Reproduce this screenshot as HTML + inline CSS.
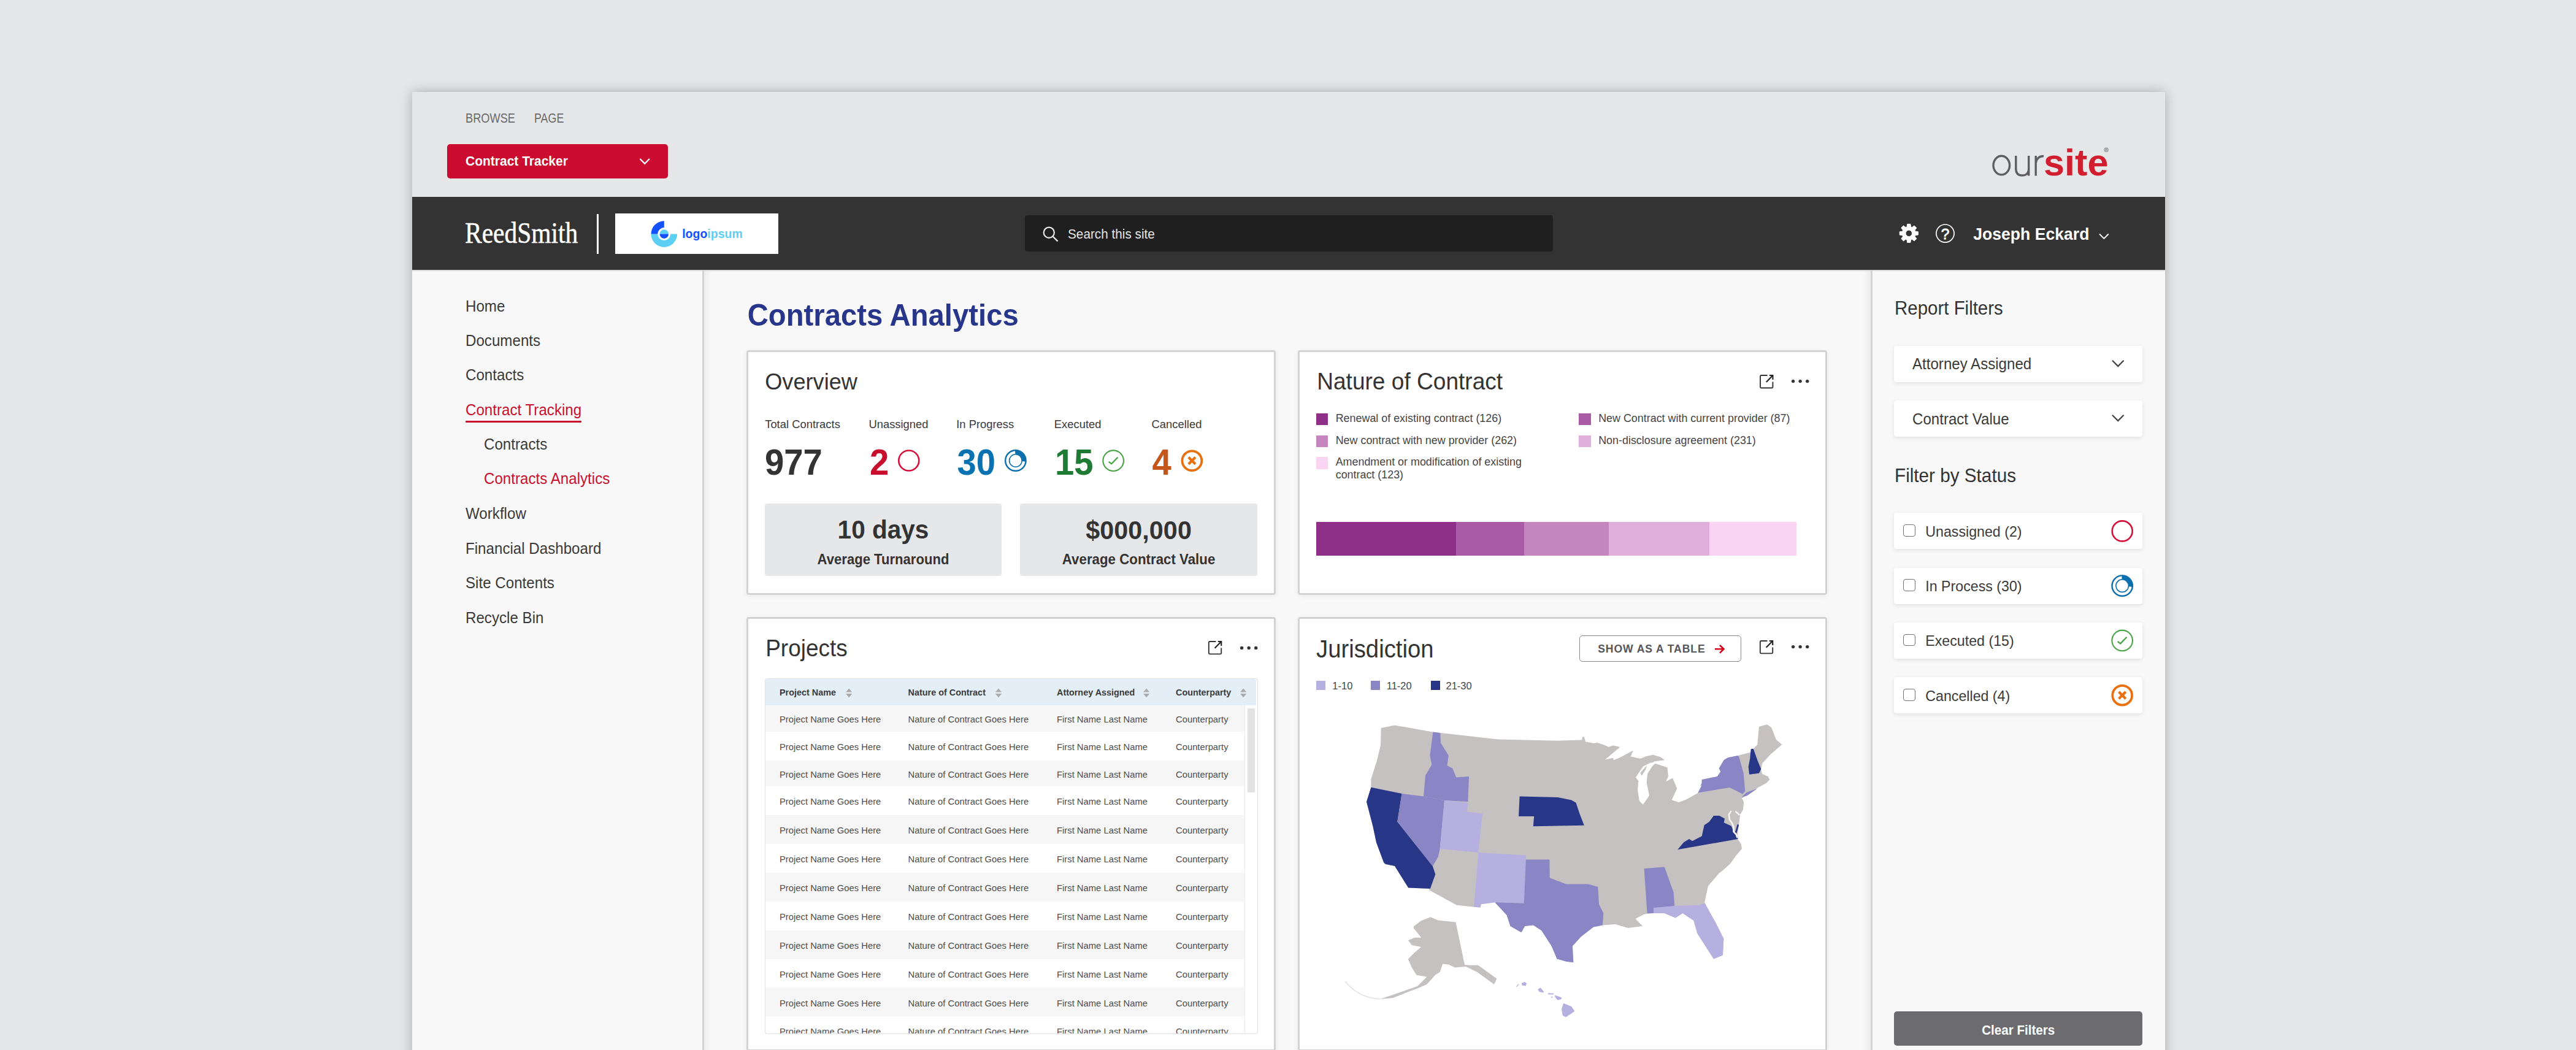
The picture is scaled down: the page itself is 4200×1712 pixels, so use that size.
<!DOCTYPE html><html><head><meta charset="utf-8"><title>Contracts Analytics</title><style>
html,body{margin:0;padding:0;width:4200px;height:1712px;overflow:hidden;background:#e6e7e9;font-family:'Liberation Sans',sans-serif;}
.t{position:absolute;white-space:pre;}
.r{position:absolute;}
.s{position:absolute;overflow:visible;}
</style></head><body>
<div class="r" style="left:672px;top:150px;width:2858px;height:1700px;background:#e6e7e9;box-shadow:0 0 20px rgba(0,0,0,0.27);"></div>
<div class="r" style="left:672.0px;top:440.0px;width:2858.0px;height:1272.0px;background:#f8f8f8;"></div>
<div class="r" style="left:1148.0px;top:440.0px;width:12.0px;height:1272.0px;background:linear-gradient(to right, #ececec, rgba(247,247,247,0));"></div>
<div class="r" style="left:3038.0px;top:440.0px;width:12.0px;height:1272.0px;background:linear-gradient(to left, #ececec, rgba(247,247,247,0));"></div>
<div class="r" style="left:1145.0px;top:440.0px;width:3.0px;height:1272.0px;background:#d3d3d3;"></div>
<div class="r" style="left:3049.5px;top:440.0px;width:3.0px;height:1272.0px;background:#d3d3d3;"></div>
<div class="r" style="left:672.0px;top:321.0px;width:2858.0px;height:119.0px;background:#333333;"></div>
<div class="r" style="left:672.0px;top:440.0px;width:2858.0px;height:3.0px;background:linear-gradient(#cfcfcf, rgba(247,247,247,0));"></div>
<div class="t" style="left:759.3px;top:178.48px;font-size:22px;line-height:29px;color:#6a6a6a;font-weight:400;transform:scaleX(0.828) ;transform-origin:0 22.12px;">BROWSE</div>
<div class="t" style="left:870.7px;top:178.48px;font-size:22px;line-height:29px;color:#6a6a6a;font-weight:400;transform:scaleX(0.812) ;transform-origin:0 22.12px;">PAGE</div>
<div class="r" style="left:728.6px;top:235.0px;width:360.1px;height:56.0px;background:#cb0b2f;border-radius:5px;"></div>
<div class="t" style="left:759.0px;top:249.42px;font-size:21px;line-height:27px;color:#ffffff;font-weight:700;transform:scaleY(1.04) ;transform-origin:0 20.78px;">Contract Tracker</div>
<svg class="s" style="left:1035px;top:250px;" width="32" height="25" viewBox="1035 250 32 25"><polyline points="1043.5,259 1051.2,266.8 1058.9,259" fill="none" stroke="#fff" stroke-width="2.3"/></svg>
<svg class="s" style="left:3240px;top:230px;" width="210" height="70" viewBox="3240 230 210 70">
<ellipse cx="3263.3" cy="269.6" rx="13.3" ry="15.3" fill="none" stroke="#5e5e60" stroke-width="3.4"/>
<path d="M3286.8,254 V275 Q3286.8,286 3297,286 Q3307.7,286 3307.7,275 M3307.7,254 V286.5" fill="none" stroke="#5e5e60" stroke-width="3.4"/>
<path d="M3319.2,254 V286.5 M3319.2,266 Q3321,254.5 3332,254.5" fill="none" stroke="#5e5e60" stroke-width="3.4"/>
<circle cx="3434.1" cy="244.2" r="3.2" fill="#c9c9ca" stroke="#9a9a9b" stroke-width="1.1"/><path d="M3433,246.3 V242.3 H3434.6 Q3435.6,242.3 3435.6,243.3 Q3435.6,244.3 3434.6,244.3 H3433 M3434.4,244.3 L3435.6,246.3" fill="none" stroke="#8a8a8b" stroke-width="0.7"/>
</svg>
<div class="t" style="left:3332.0px;top:225.16px;font-size:61.6px;line-height:80px;color:#d21f30;font-weight:700;transform:scaleX(0.995) ;transform-origin:0 61.34px;">site</div>
<div class="t" style="left:758.2px;top:348.50px;font-size:48px;line-height:62px;color:#ffffff;font-weight:400;font-family:'Liberation Serif', serif;transform:scaleX(0.864) ;transform-origin:0 47.20px;-webkit-text-stroke:0.5px #fff;">ReedSmith</div>
<div class="r" style="left:972.5px;top:349.0px;width:3.0px;height:65.0px;background:#ffffff;"></div>
<div class="r" style="left:1002.8px;top:348.4px;width:266.2px;height:65.9px;background:#ffffff;"></div>
<svg class="s" style="left:1055px;top:355px;" width="55" height="55" viewBox="1055 355 55 55">
<path d="M1061.5,381.6 A21.3,21.3 0 0 0 1104.1,381.6 L1093.3,381.6 A10.5,10.5 0 0 1 1072.3,381.6 Z" fill="#5ccff2"/>
<path d="M1061.5,381.6 A21.3,21.3 0 0 1 1082.8,360.3 L1082.8,371.1 A10.5,10.5 0 0 0 1072.3,381.6 Z" fill="#1351ff"/>
<path d="M1075.5,381.6 A7.3,7.3 0 0 1 1090.1,381.6 Z" fill="#5ccff2"/>
<path d="M1075.5,381.6 A7.3,7.3 0 0 0 1090.1,381.6 Z" fill="#1351ff"/>
</svg>
<div class="t" style="left:1112.2px;top:368.84px;font-size:19.5px;line-height:25px;color:#1351ff;font-weight:700;transform:scaleY(1.04) ;transform-origin:0 19.26px;"><span style="color:#1351ff">logo</span><span style="color:#5ccff2">ipsum</span></div>
<div class="r" style="left:1671.0px;top:351.0px;width:860.5px;height:58.7px;background:#1f1f1f;border-radius:4px;"></div>
<svg class="s" style="left:1695px;top:364px;" width="35" height="35" viewBox="1695 364 35 35"><circle cx="1710.3" cy="379.2" r="8.6" fill="none" stroke="#e8e8e8" stroke-width="2.2"/><line x1="1716.6" y1="385.5" x2="1724.5" y2="393.4" stroke="#e8e8e8" stroke-width="2.4"/></svg>
<div class="t" style="left:1740.8px;top:367.95px;font-size:21.5px;line-height:28px;color:#e4e4e4;font-weight:400;transform:scaleX(0.965) scaleY(1.04) ;transform-origin:0 21.45px;">Search this site</div>
<svg class="s" style="left:3090px;top:360px;" width="45" height="45" viewBox="3090 360 45 45"><path d="M3122.81,377.15 L3127.38,377.81 L3127.38,382.99 L3122.81,383.65 L3122.03,385.53 L3124.79,389.23 L3121.13,392.89 L3117.43,390.13 L3115.55,390.91 L3114.89,395.48 L3109.71,395.48 L3109.05,390.91 L3107.17,390.13 L3103.47,392.89 L3099.81,389.23 L3102.57,385.53 L3101.79,383.65 L3097.22,382.99 L3097.22,377.81 L3101.79,377.15 L3102.57,375.27 L3099.81,371.57 L3103.47,367.91 L3107.17,370.67 L3109.05,369.89 L3109.71,365.32 L3114.89,365.32 L3115.55,369.89 L3117.43,370.67 L3121.13,367.91 L3124.79,371.57 L3122.03,375.27 Z M3117.5,380.4 A5.2,5.2 0 1 0 3107.1000000000004,380.4 A5.2,5.2 0 1 0 3117.5,380.4 Z" fill="#fff" fill-rule="evenodd" stroke="#fff" stroke-width="1" stroke-linejoin="round"/></svg>
<svg class="s" style="left:3150px;top:360px;" width="45" height="45" viewBox="3150 360 45 45"><circle cx="3171.5" cy="380.6" r="14.6" fill="none" stroke="#fff" stroke-width="1.7"/></svg>
<div class="t" style="left:2171.6px;width:2000px;text-align:center;top:365.71px;font-size:24.5px;line-height:32px;color:#ffffff;font-weight:400;-webkit-text-stroke:0.8px #fff;">?</div>
<div class="t" style="left:3217.2px;top:364.88px;font-size:26.6px;line-height:35px;color:#ffffff;font-weight:700;transform:scaleY(1.04) ;transform-origin:0 26.72px;">Joseph Eckard</div>
<svg class="s" style="left:3415px;top:372px;" width="30" height="25" viewBox="3415 372 30 25"><polyline points="3423,381.5 3430.4,389 3437.8,381.5" fill="none" stroke="#fff" stroke-width="1.9"/></svg>
<div class="t" style="left:759.0px;top:483.83px;font-size:24.15px;line-height:31px;color:#3a3a3a;font-weight:400;transform:scaleY(1.07) ;transform-origin:0 23.87px;">Home</div>
<div class="t" style="left:759.0px;top:540.03px;font-size:24.15px;line-height:31px;color:#3a3a3a;font-weight:400;transform:scaleY(1.07) ;transform-origin:0 23.87px;">Documents</div>
<div class="t" style="left:759.0px;top:596.33px;font-size:24.15px;line-height:31px;color:#3a3a3a;font-weight:400;transform:scaleY(1.07) ;transform-origin:0 23.87px;">Contacts</div>
<div class="t" style="left:759.0px;top:652.53px;font-size:24.15px;line-height:31px;color:#c8102e;font-weight:400;transform:scaleY(1.07) ;transform-origin:0 23.87px;">Contract Tracking</div>
<div class="t" style="left:789.0px;top:709.03px;font-size:24.15px;line-height:31px;color:#3a3a3a;font-weight:400;transform:scaleY(1.07) ;transform-origin:0 23.87px;">Contracts</div>
<div class="t" style="left:789.0px;top:765.23px;font-size:24.15px;line-height:31px;color:#c8102e;font-weight:400;transform:scaleY(1.07) ;transform-origin:0 23.87px;">Contracts Analytics</div>
<div class="t" style="left:759.0px;top:821.93px;font-size:24.15px;line-height:31px;color:#3a3a3a;font-weight:400;transform:scaleY(1.07) ;transform-origin:0 23.87px;">Workflow</div>
<div class="t" style="left:759.0px;top:878.63px;font-size:24.15px;line-height:31px;color:#3a3a3a;font-weight:400;transform:scaleY(1.07) ;transform-origin:0 23.87px;">Financial Dashboard</div>
<div class="t" style="left:759.0px;top:935.33px;font-size:24.15px;line-height:31px;color:#3a3a3a;font-weight:400;transform:scaleY(1.07) ;transform-origin:0 23.87px;">Site Contents</div>
<div class="t" style="left:759.0px;top:991.73px;font-size:24.15px;line-height:31px;color:#3a3a3a;font-weight:400;transform:scaleY(1.07) ;transform-origin:0 23.87px;">Recycle Bin</div>
<div class="r" style="left:758.6px;top:685.6px;width:189.4px;height:3.0px;background:#c8102e;border-radius:1px;"></div>
<div class="t" style="left:1218.7px;top:484.23px;font-size:47.25px;line-height:61px;color:#27358a;font-weight:700;transform:scaleY(1.04) ;transform-origin:0 46.87px;">Contracts Analytics</div>
<div class="r" style="left:1217px;top:571px;width:857px;height:393px;background:#fff;border:3px solid #d3d3d3;border-radius:4px;box-shadow:0 2px 8px rgba(0,0,0,0.06);"></div>
<div class="r" style="left:2116px;top:571px;width:857px;height:393px;background:#fff;border:3px solid #d3d3d3;border-radius:4px;box-shadow:0 2px 8px rgba(0,0,0,0.06);"></div>
<div class="r" style="left:1217px;top:1006px;width:857px;height:701.5px;background:#fff;border:3px solid #d3d3d3;border-radius:4px;box-shadow:0 2px 8px rgba(0,0,0,0.06);"></div>
<div class="r" style="left:2116px;top:1006px;width:857px;height:701.5px;background:#fff;border:3px solid #d3d3d3;border-radius:4px;box-shadow:0 2px 8px rgba(0,0,0,0.06);"></div>
<div class="t" style="left:1247.2px;top:598.76px;font-size:36.2px;line-height:47px;color:#333;font-weight:400;transform:scaleY(1.04) ;transform-origin:0 36.04px;">Overview</div>
<div class="t" style="left:1247.2px;top:679.62px;font-size:18.4px;line-height:24px;color:#3a3a3a;font-weight:400;transform:scaleY(1.04) ;transform-origin:0 18.38px;">Total Contracts</div>
<div class="t" style="left:1416.4px;top:679.62px;font-size:18.4px;line-height:24px;color:#3a3a3a;font-weight:400;transform:scaleY(1.04) ;transform-origin:0 18.38px;">Unassigned</div>
<div class="t" style="left:1559.2px;top:679.62px;font-size:18.4px;line-height:24px;color:#3a3a3a;font-weight:400;transform:scaleY(1.04) ;transform-origin:0 18.38px;">In Progress</div>
<div class="t" style="left:1718.8px;top:679.62px;font-size:18.4px;line-height:24px;color:#3a3a3a;font-weight:400;transform:scaleY(1.04) ;transform-origin:0 18.38px;">Executed</div>
<div class="t" style="left:1877.6px;top:679.62px;font-size:18.4px;line-height:24px;color:#3a3a3a;font-weight:400;transform:scaleY(1.04) ;transform-origin:0 18.38px;">Cancelled</div>
<div class="t" style="left:1247.0px;top:717.99px;font-size:56.3px;line-height:73px;color:#333333;font-weight:700;transform:scaleY(1.045) ;transform-origin:0 56.01px;">977</div>
<div class="t" style="left:1418.0px;top:717.99px;font-size:56.3px;line-height:73px;color:#c8102e;font-weight:700;transform:scaleY(1.045) ;transform-origin:0 56.01px;">2</div>
<div class="t" style="left:1560.4px;top:717.99px;font-size:56.3px;line-height:73px;color:#0a72b0;font-weight:700;transform:scaleY(1.045) ;transform-origin:0 56.01px;">30</div>
<div class="t" style="left:1720.0px;top:717.99px;font-size:56.3px;line-height:73px;color:#1f7a34;font-weight:700;transform:scaleY(1.045) ;transform-origin:0 56.01px;">15</div>
<div class="t" style="left:1878.4px;top:717.99px;font-size:56.3px;line-height:73px;color:#c5561a;font-weight:700;transform:scaleY(1.045) ;transform-origin:0 56.01px;">4</div>
<svg class="s" style="left:1440px;top:720px;" width="540" height="60" viewBox="1440 720 540 60"><circle cx="1481.8" cy="751" r="16.5" fill="none" stroke="#d4103a" stroke-width="2.6"/><circle cx="1655.9" cy="751" r="16.7" fill="none" stroke="#0b6fae" stroke-width="2.4"/><circle cx="1655.9" cy="751" r="10.3" fill="none" stroke="#0b6fae" stroke-width="1.6"/><path d="M1655.00,733.82 A17.2,17.2 0 0 1 1673.01,752.80 L1666.44,752.11 A10.6,10.6 0 0 0 1655.35,740.41 Z" fill="#0b6fae"/><circle cx="1815.2" cy="751.2" r="16.8" fill="none" stroke="#4ba447" stroke-width="2.1"/><polyline points="1807.7,752.8000000000001 1812.2,756.2 1822.5,745.6" fill="none" stroke="#4ba447" stroke-width="2.3"/><circle cx="1943.4" cy="751.2" r="15.9" fill="none" stroke="#e9700f" stroke-width="3.8"/><path d="M1937.8000000000002,745.6 L1949.0,756.8000000000001 M1949.0,745.6 L1937.8000000000002,756.8000000000001" stroke="#e9700f" stroke-width="4.2"/></svg>
<div class="r" style="left:1246.8px;top:821.2px;width:386.4px;height:118.0px;background:#e6e7e9;border-radius:4px;"></div>
<div class="r" style="left:1663.2px;top:821.2px;width:386.8px;height:118.0px;background:#e6e7e9;border-radius:4px;"></div>
<div class="t" style="left:440.0px;width:2000px;text-align:center;top:838.45px;font-size:40.55px;line-height:53px;color:#333;font-weight:700;transform:scaleY(1.04) ;transform-origin:0 40.55px;">10 days</div>
<div class="t" style="left:440.0px;width:2000px;text-align:center;top:897.84px;font-size:22.1px;line-height:29px;color:#333;font-weight:700;transform:scaleY(1.04) ;transform-origin:0 22.16px;">Average Turnaround</div>
<div class="t" style="left:856.6px;width:2000px;text-align:center;top:837.65px;font-size:41.4px;line-height:54px;color:#333;font-weight:700;transform:scaleY(1.04) ;transform-origin:0 41.35px;">$000,000</div>
<div class="t" style="left:856.6px;width:2000px;text-align:center;top:897.77px;font-size:22.3px;line-height:29px;color:#333;font-weight:700;transform:scaleY(1.04) ;transform-origin:0 22.23px;">Average Contract Value</div>
<div class="t" style="left:2147.2px;top:597.94px;font-size:37.1px;line-height:48px;color:#333;font-weight:400;transform:scaleY(1.04) ;transform-origin:0 36.86px;">Nature of Contract</div>
<svg class="s" style="left:2860px;top:600px;" width="100" height="45" viewBox="2860 600 100 45"><path d="M2881.6499999999996,612.0500000000001 H2871.5499999999997 Q2870.0499999999997,612.0500000000001 2870.0499999999997,613.5500000000001 V630.9499999999999 Q2870.0499999999997,632.4499999999999 2871.5499999999997,632.4499999999999 H2888.9500000000003 Q2890.4500000000003,632.4499999999999 2890.4500000000003,630.9499999999999 V622.5500000000001" fill="none" stroke="#333" stroke-width="1.9"/><path d="M2884.95,612.0500000000001 H2890.4500000000003 V619.0500000000001" fill="none" stroke="#222" stroke-width="2.1"/><path d="M2890.15,612.35 L2879.85,622.95" fill="none" stroke="#222" stroke-width="2.1999999999999997"/><circle cx="2923.60" cy="621.6" r="2.7" fill="#333"/><circle cx="2935.15" cy="621.6" r="2.7" fill="#333"/><circle cx="2946.70" cy="621.6" r="2.7" fill="#333"/></svg>
<div class="r" style="left:2145.6px;top:673.8px;width:19.6px;height:19.2px;background:#8e3088;"></div>
<div class="t" style="left:2177.7px;top:670.80px;font-size:17.9px;line-height:23px;color:#444;font-weight:400;transform:scaleY(1.04) ;transform-origin:0 17.70px;">Renewal of existing contract (126)</div>
<div class="r" style="left:2145.6px;top:709.7px;width:19.6px;height:19.2px;background:#c586bd;"></div>
<div class="t" style="left:2177.7px;top:706.70px;font-size:17.9px;line-height:23px;color:#444;font-weight:400;transform:scaleY(1.04) ;transform-origin:0 17.70px;">New contract with new provider (262)</div>
<div class="r" style="left:2145.6px;top:745.4px;width:19.6px;height:19.2px;background:#fad5f3;"></div>
<div class="t" style="left:2177.7px;top:742.30px;font-size:17.9px;line-height:23px;color:#444;font-weight:400;transform:scaleY(1.04) ;transform-origin:0 17.70px;">Amendment or modification of existing</div>
<div class="r" style="left:2574.4px;top:673.8px;width:19.6px;height:19.2px;background:#a95ca5;"></div>
<div class="t" style="left:2606.2px;top:670.80px;font-size:17.9px;line-height:23px;color:#444;font-weight:400;transform:scaleY(1.04) ;transform-origin:0 17.70px;">New Contract with current provider (87)</div>
<div class="r" style="left:2574.4px;top:709.7px;width:19.6px;height:19.2px;background:#e0aedb;"></div>
<div class="t" style="left:2606.2px;top:706.70px;font-size:17.9px;line-height:23px;color:#444;font-weight:400;transform:scaleY(1.04) ;transform-origin:0 17.70px;">Non-disclosure agreement (231)</div>
<div class="t" style="left:2177.7px;top:763.00px;font-size:17.9px;line-height:23px;color:#444;font-weight:400;transform:scaleY(1.04) ;transform-origin:0 17.70px;">contract (123)</div>
<div class="r" style="left:2145.6px;top:850.8px;width:228.0px;height:55.2px;background:#8e3088;"></div>
<div class="r" style="left:2373.6px;top:850.8px;width:111.6px;height:55.2px;background:#a95ca5;"></div>
<div class="r" style="left:2485.2px;top:850.8px;width:138.0px;height:55.2px;background:#c586bd;"></div>
<div class="r" style="left:2623.2px;top:850.8px;width:164.0px;height:55.2px;background:#e0aedb;"></div>
<div class="r" style="left:2787.2px;top:850.8px;width:141.6px;height:55.2px;background:#fad5f3;"></div>
<div class="t" style="left:1248.2px;top:1033.58px;font-size:37px;line-height:48px;color:#333;font-weight:400;transform:scaleY(1.04) ;transform-origin:0 36.82px;">Projects</div>
<svg class="s" style="left:1960px;top:1035px;" width="100" height="45" viewBox="1960 1035 100 45"><path d="M1982.45,1045.95 H1972.3500000000001 Q1970.8500000000001,1045.95 1970.8500000000001,1047.45 V1064.85 Q1970.8500000000001,1066.35 1972.3500000000001,1066.35 H1989.75 Q1991.25,1066.35 1991.25,1064.85 V1056.45" fill="none" stroke="#333" stroke-width="1.9"/><path d="M1985.7500000000002,1045.95 H1991.25 V1052.95" fill="none" stroke="#222" stroke-width="2.1"/><path d="M1990.95,1046.25 L1980.65,1056.8500000000001" fill="none" stroke="#222" stroke-width="2.1999999999999997"/><circle cx="2024.60" cy="1056.4" r="2.7" fill="#333"/><circle cx="2036.15" cy="1056.4" r="2.7" fill="#333"/><circle cx="2047.70" cy="1056.4" r="2.7" fill="#333"/></svg>
<div class="r" style="left:1246.8px;top:1106px;width:801.8px;height:578px;border:1px solid #e3e3e3;border-radius:4px;background:#fff;overflow:hidden;"></div>
<div class="r" style="left:1247.8px;top:1106.8px;width:799.8px;height:43.2px;background:#e4eef6;border-radius:4px 4px 0 0;"></div>
<div class="t" style="left:1271.0px;top:1119.51px;font-size:14.4px;line-height:19px;color:#3a3a3a;font-weight:700;transform:scaleY(1.04) ;transform-origin:0 14.49px;">Project Name</div>
<div class="t" style="left:1480.6px;top:1119.51px;font-size:14.4px;line-height:19px;color:#3a3a3a;font-weight:700;transform:scaleY(1.04) ;transform-origin:0 14.49px;">Nature of Contract</div>
<div class="t" style="left:1723.0px;top:1119.51px;font-size:14.4px;line-height:19px;color:#3a3a3a;font-weight:700;transform:scaleY(1.04) ;transform-origin:0 14.49px;">Attorney Assigned</div>
<div class="t" style="left:1917.0px;top:1119.51px;font-size:14.4px;line-height:19px;color:#3a3a3a;font-weight:700;transform:scaleY(1.04) ;transform-origin:0 14.49px;">Counterparty</div>
<svg class="s" style="left:1370px;top:1115px;" width="680" height="30" viewBox="1370 1115 680 30"><path d="M1379,1128.6 L1384.2,1122.4 L1389.4,1128.6 Z M1379,1131 L1384.2,1137.2 L1389.4,1131 Z" fill="#ababab"/><path d="M1622.8,1128.6 L1628.0,1122.4 L1633.2,1128.6 Z M1622.8,1131 L1628.0,1137.2 L1633.2,1131 Z" fill="#ababab"/><path d="M1864,1128.6 L1869.2,1122.4 L1874.4,1128.6 Z M1864,1131 L1869.2,1137.2 L1874.4,1131 Z" fill="#ababab"/><path d="M2022,1128.6 L2027.2,1122.4 L2032.4,1128.6 Z M2022,1131 L2027.2,1137.2 L2032.4,1131 Z" fill="#ababab"/></svg>
<div class="r" style="left:1247.8px;top:1150.0px;width:781.2px;height:43.0px;background:#f6f6f6;"></div>
<div class="t" style="left:1271.0px;top:1164.27px;font-size:14.8px;line-height:19px;color:#4d4d4d;font-weight:400;transform:scaleY(1.04) ;transform-origin:0 14.63px;">Project Name Goes Here</div>
<div class="t" style="left:1480.6px;top:1164.27px;font-size:14.8px;line-height:19px;color:#4d4d4d;font-weight:400;transform:scaleY(1.04) ;transform-origin:0 14.63px;">Nature of Contract Goes Here</div>
<div class="t" style="left:1723.0px;top:1164.27px;font-size:14.8px;line-height:19px;color:#4d4d4d;font-weight:400;transform:scaleY(1.04) ;transform-origin:0 14.63px;">First Name Last Name</div>
<div class="t" style="left:1917.0px;top:1164.27px;font-size:14.8px;line-height:19px;color:#4d4d4d;font-weight:400;transform:scaleY(1.04) ;transform-origin:0 14.63px;">Counterparty</div>
<div class="t" style="left:1271.0px;top:1209.07px;font-size:14.8px;line-height:19px;color:#4d4d4d;font-weight:400;transform:scaleY(1.04) ;transform-origin:0 14.63px;">Project Name Goes Here</div>
<div class="t" style="left:1480.6px;top:1209.07px;font-size:14.8px;line-height:19px;color:#4d4d4d;font-weight:400;transform:scaleY(1.04) ;transform-origin:0 14.63px;">Nature of Contract Goes Here</div>
<div class="t" style="left:1723.0px;top:1209.07px;font-size:14.8px;line-height:19px;color:#4d4d4d;font-weight:400;transform:scaleY(1.04) ;transform-origin:0 14.63px;">First Name Last Name</div>
<div class="t" style="left:1917.0px;top:1209.07px;font-size:14.8px;line-height:19px;color:#4d4d4d;font-weight:400;transform:scaleY(1.04) ;transform-origin:0 14.63px;">Counterparty</div>
<div class="r" style="left:1247.8px;top:1239.6px;width:781.2px;height:42.8px;background:#f6f6f6;"></div>
<div class="t" style="left:1271.0px;top:1253.77px;font-size:14.8px;line-height:19px;color:#4d4d4d;font-weight:400;transform:scaleY(1.04) ;transform-origin:0 14.63px;">Project Name Goes Here</div>
<div class="t" style="left:1480.6px;top:1253.77px;font-size:14.8px;line-height:19px;color:#4d4d4d;font-weight:400;transform:scaleY(1.04) ;transform-origin:0 14.63px;">Nature of Contract Goes Here</div>
<div class="t" style="left:1723.0px;top:1253.77px;font-size:14.8px;line-height:19px;color:#4d4d4d;font-weight:400;transform:scaleY(1.04) ;transform-origin:0 14.63px;">First Name Last Name</div>
<div class="t" style="left:1917.0px;top:1253.77px;font-size:14.8px;line-height:19px;color:#4d4d4d;font-weight:400;transform:scaleY(1.04) ;transform-origin:0 14.63px;">Counterparty</div>
<div class="t" style="left:1271.0px;top:1298.22px;font-size:14.8px;line-height:19px;color:#4d4d4d;font-weight:400;transform:scaleY(1.04) ;transform-origin:0 14.63px;">Project Name Goes Here</div>
<div class="t" style="left:1480.6px;top:1298.22px;font-size:14.8px;line-height:19px;color:#4d4d4d;font-weight:400;transform:scaleY(1.04) ;transform-origin:0 14.63px;">Nature of Contract Goes Here</div>
<div class="t" style="left:1723.0px;top:1298.22px;font-size:14.8px;line-height:19px;color:#4d4d4d;font-weight:400;transform:scaleY(1.04) ;transform-origin:0 14.63px;">First Name Last Name</div>
<div class="t" style="left:1917.0px;top:1298.22px;font-size:14.8px;line-height:19px;color:#4d4d4d;font-weight:400;transform:scaleY(1.04) ;transform-origin:0 14.63px;">Counterparty</div>
<div class="r" style="left:1247.8px;top:1328.5px;width:781.2px;height:47.3px;background:#f6f6f6;"></div>
<div class="t" style="left:1271.0px;top:1344.92px;font-size:14.8px;line-height:19px;color:#4d4d4d;font-weight:400;transform:scaleY(1.04) ;transform-origin:0 14.63px;">Project Name Goes Here</div>
<div class="t" style="left:1480.6px;top:1344.92px;font-size:14.8px;line-height:19px;color:#4d4d4d;font-weight:400;transform:scaleY(1.04) ;transform-origin:0 14.63px;">Nature of Contract Goes Here</div>
<div class="t" style="left:1723.0px;top:1344.92px;font-size:14.8px;line-height:19px;color:#4d4d4d;font-weight:400;transform:scaleY(1.04) ;transform-origin:0 14.63px;">First Name Last Name</div>
<div class="t" style="left:1917.0px;top:1344.92px;font-size:14.8px;line-height:19px;color:#4d4d4d;font-weight:400;transform:scaleY(1.04) ;transform-origin:0 14.63px;">Counterparty</div>
<div class="t" style="left:1271.0px;top:1392.02px;font-size:14.8px;line-height:19px;color:#4d4d4d;font-weight:400;transform:scaleY(1.04) ;transform-origin:0 14.63px;">Project Name Goes Here</div>
<div class="t" style="left:1480.6px;top:1392.02px;font-size:14.8px;line-height:19px;color:#4d4d4d;font-weight:400;transform:scaleY(1.04) ;transform-origin:0 14.63px;">Nature of Contract Goes Here</div>
<div class="t" style="left:1723.0px;top:1392.02px;font-size:14.8px;line-height:19px;color:#4d4d4d;font-weight:400;transform:scaleY(1.04) ;transform-origin:0 14.63px;">First Name Last Name</div>
<div class="t" style="left:1917.0px;top:1392.02px;font-size:14.8px;line-height:19px;color:#4d4d4d;font-weight:400;transform:scaleY(1.04) ;transform-origin:0 14.63px;">Counterparty</div>
<div class="r" style="left:1247.8px;top:1422.7px;width:781.2px;height:47.3px;background:#f6f6f6;"></div>
<div class="t" style="left:1271.0px;top:1439.12px;font-size:14.8px;line-height:19px;color:#4d4d4d;font-weight:400;transform:scaleY(1.04) ;transform-origin:0 14.63px;">Project Name Goes Here</div>
<div class="t" style="left:1480.6px;top:1439.12px;font-size:14.8px;line-height:19px;color:#4d4d4d;font-weight:400;transform:scaleY(1.04) ;transform-origin:0 14.63px;">Nature of Contract Goes Here</div>
<div class="t" style="left:1723.0px;top:1439.12px;font-size:14.8px;line-height:19px;color:#4d4d4d;font-weight:400;transform:scaleY(1.04) ;transform-origin:0 14.63px;">First Name Last Name</div>
<div class="t" style="left:1917.0px;top:1439.12px;font-size:14.8px;line-height:19px;color:#4d4d4d;font-weight:400;transform:scaleY(1.04) ;transform-origin:0 14.63px;">Counterparty</div>
<div class="t" style="left:1271.0px;top:1486.02px;font-size:14.8px;line-height:19px;color:#4d4d4d;font-weight:400;transform:scaleY(1.04) ;transform-origin:0 14.63px;">Project Name Goes Here</div>
<div class="t" style="left:1480.6px;top:1486.02px;font-size:14.8px;line-height:19px;color:#4d4d4d;font-weight:400;transform:scaleY(1.04) ;transform-origin:0 14.63px;">Nature of Contract Goes Here</div>
<div class="t" style="left:1723.0px;top:1486.02px;font-size:14.8px;line-height:19px;color:#4d4d4d;font-weight:400;transform:scaleY(1.04) ;transform-origin:0 14.63px;">First Name Last Name</div>
<div class="t" style="left:1917.0px;top:1486.02px;font-size:14.8px;line-height:19px;color:#4d4d4d;font-weight:400;transform:scaleY(1.04) ;transform-origin:0 14.63px;">Counterparty</div>
<div class="r" style="left:1247.8px;top:1516.5px;width:781.2px;height:47.3px;background:#f6f6f6;"></div>
<div class="t" style="left:1271.0px;top:1532.92px;font-size:14.8px;line-height:19px;color:#4d4d4d;font-weight:400;transform:scaleY(1.04) ;transform-origin:0 14.63px;">Project Name Goes Here</div>
<div class="t" style="left:1480.6px;top:1532.92px;font-size:14.8px;line-height:19px;color:#4d4d4d;font-weight:400;transform:scaleY(1.04) ;transform-origin:0 14.63px;">Nature of Contract Goes Here</div>
<div class="t" style="left:1723.0px;top:1532.92px;font-size:14.8px;line-height:19px;color:#4d4d4d;font-weight:400;transform:scaleY(1.04) ;transform-origin:0 14.63px;">First Name Last Name</div>
<div class="t" style="left:1917.0px;top:1532.92px;font-size:14.8px;line-height:19px;color:#4d4d4d;font-weight:400;transform:scaleY(1.04) ;transform-origin:0 14.63px;">Counterparty</div>
<div class="t" style="left:1271.0px;top:1579.82px;font-size:14.8px;line-height:19px;color:#4d4d4d;font-weight:400;transform:scaleY(1.04) ;transform-origin:0 14.63px;">Project Name Goes Here</div>
<div class="t" style="left:1480.6px;top:1579.82px;font-size:14.8px;line-height:19px;color:#4d4d4d;font-weight:400;transform:scaleY(1.04) ;transform-origin:0 14.63px;">Nature of Contract Goes Here</div>
<div class="t" style="left:1723.0px;top:1579.82px;font-size:14.8px;line-height:19px;color:#4d4d4d;font-weight:400;transform:scaleY(1.04) ;transform-origin:0 14.63px;">First Name Last Name</div>
<div class="t" style="left:1917.0px;top:1579.82px;font-size:14.8px;line-height:19px;color:#4d4d4d;font-weight:400;transform:scaleY(1.04) ;transform-origin:0 14.63px;">Counterparty</div>
<div class="r" style="left:1247.8px;top:1610.3px;width:781.2px;height:46.9px;background:#f6f6f6;"></div>
<div class="t" style="left:1271.0px;top:1626.52px;font-size:14.8px;line-height:19px;color:#4d4d4d;font-weight:400;transform:scaleY(1.04) ;transform-origin:0 14.63px;">Project Name Goes Here</div>
<div class="t" style="left:1480.6px;top:1626.52px;font-size:14.8px;line-height:19px;color:#4d4d4d;font-weight:400;transform:scaleY(1.04) ;transform-origin:0 14.63px;">Nature of Contract Goes Here</div>
<div class="t" style="left:1723.0px;top:1626.52px;font-size:14.8px;line-height:19px;color:#4d4d4d;font-weight:400;transform:scaleY(1.04) ;transform-origin:0 14.63px;">First Name Last Name</div>
<div class="t" style="left:1917.0px;top:1626.52px;font-size:14.8px;line-height:19px;color:#4d4d4d;font-weight:400;transform:scaleY(1.04) ;transform-origin:0 14.63px;">Counterparty</div>
<div class="t" style="left:1271.0px;top:1673.22px;font-size:14.8px;line-height:19px;color:#4d4d4d;font-weight:400;transform:scaleY(1.04) ;transform-origin:0 14.63px;">Project Name Goes Here</div>
<div class="t" style="left:1480.6px;top:1673.22px;font-size:14.8px;line-height:19px;color:#4d4d4d;font-weight:400;transform:scaleY(1.04) ;transform-origin:0 14.63px;">Nature of Contract Goes Here</div>
<div class="t" style="left:1723.0px;top:1673.22px;font-size:14.8px;line-height:19px;color:#4d4d4d;font-weight:400;transform:scaleY(1.04) ;transform-origin:0 14.63px;">First Name Last Name</div>
<div class="t" style="left:1917.0px;top:1673.22px;font-size:14.8px;line-height:19px;color:#4d4d4d;font-weight:400;transform:scaleY(1.04) ;transform-origin:0 14.63px;">Counterparty</div>
<div class="r" style="left:1240.0px;top:1685.0px;width:820.0px;height:24.0px;background:#ffffff;"></div>
<div class="r" style="left:1246.8px;top:1106px;width:801.8px;height:578px;border:1px solid #e3e3e3;border-radius:4px;"></div>
<div class="r" style="left:2029.0px;top:1150.0px;width:1.0px;height:534.5px;background:#ececec;"></div>
<div class="r" style="left:2030.0px;top:1150.0px;width:19.0px;height:534.5px;background:#ffffff;"></div>
<div class="r" style="left:2034.0px;top:1155.0px;width:12.0px;height:137.0px;background:#e3e3e3;"></div>
<div class="t" style="left:2146.0px;top:1033.73px;font-size:38.3px;line-height:50px;color:#333;font-weight:400;transform:scaleY(1.04) ;transform-origin:0 38.27px;">Jurisdiction</div>
<div class="r" style="left:2575.2px;top:1036px;width:264px;height:43.4px;box-sizing:border-box;border:1.8px solid #8a8a8a;border-radius:5px;background:#fff;"></div>
<div class="t" style="left:2605.2px;top:1047.20px;font-size:17.6px;line-height:23px;color:#56565b;font-weight:700;transform:scaleY(1.04) ;transform-origin:0 17.60px;letter-spacing:0.9px;">SHOW AS A TABLE</div>
<svg class="s" style="left:2790px;top:1045px;" width="30" height="25" viewBox="2790 1045 30 25"><path d="M2796,1058.3 H2810 M2804,1052 L2810.5,1058.3 L2804,1064.6" fill="none" stroke="#d0021b" stroke-width="2.6"/></svg>
<svg class="s" style="left:2860px;top:1035px;" width="100" height="45" viewBox="2860 1035 100 45"><path d="M2881.45,1044.95 H2871.35 Q2869.85,1044.95 2869.85,1046.45 V1063.85 Q2869.85,1065.35 2871.35,1065.35 H2888.7500000000005 Q2890.2500000000005,1065.35 2890.2500000000005,1063.85 V1055.45" fill="none" stroke="#333" stroke-width="1.9"/><path d="M2884.75,1044.95 H2890.2500000000005 V1051.95" fill="none" stroke="#222" stroke-width="2.1"/><path d="M2889.9500000000003,1045.25 L2879.65,1055.8500000000001" fill="none" stroke="#222" stroke-width="2.1999999999999997"/><circle cx="2923.60" cy="1054.6" r="2.7" fill="#333"/><circle cx="2935.15" cy="1054.6" r="2.7" fill="#333"/><circle cx="2946.70" cy="1054.6" r="2.7" fill="#333"/></svg>
<div class="r" style="left:2145.8px;top:1109.8px;width:15.2px;height:15.2px;background:#b5b0e0;"></div>
<div class="t" style="left:2172.3px;top:1107.58px;font-size:16.5px;line-height:21px;color:#444;font-weight:400;transform:scaleY(1.04) ;transform-origin:0 16.22px;">1-10</div>
<div class="r" style="left:2235.2px;top:1109.8px;width:15.2px;height:15.2px;background:#8a85c4;"></div>
<div class="t" style="left:2260.7px;top:1107.58px;font-size:16.5px;line-height:21px;color:#444;font-weight:400;transform:scaleY(1.04) ;transform-origin:0 16.22px;">11-20</div>
<div class="r" style="left:2332.7px;top:1109.8px;width:15.2px;height:15.2px;background:#283688;"></div>
<div class="t" style="left:2357.5px;top:1107.58px;font-size:16.5px;line-height:21px;color:#444;font-weight:400;transform:scaleY(1.04) ;transform-origin:0 16.22px;">21-30</div>
<svg class="s" style="left:2180px;top:1170px;" width="740" height="500" viewBox="2180 1170 740 500"><polygon points="2251.7,1187.1 2273.8,1182.4 2335.9,1193.6 2442.2,1205.4 2540.0,1207.8 2560.0,1207.1 2579.3,1206.4 2580.0,1201.4 2582.9,1201.4 2585.0,1209.3 2598.6,1212.1 2604.3,1211.1 2614.3,1214.3 2622.9,1217.9 2630.0,1215.4 2641.4,1217.9 2617.1,1238.6 2630.0,1235.7 2631.4,1239.3 2642.9,1234.3 2662.9,1223.6 2658.6,1233.6 2668.6,1235.7 2674.3,1237.1 2684.3,1232.9 2695.0,1230.7 2707.1,1234.3 2714.3,1239.3 2697.1,1241.4 2694.3,1244.3 2701.4,1245.7 2718.6,1251.4 2720.0,1265.7 2716.4,1274.3 2727.1,1268.6 2734.3,1285.7 2725.7,1304.3 2737.3,1308.0 2748.0,1304.0 2768.0,1292.7 2768.0,1290.7 2774.7,1276.7 2774.7,1271.3 2784.0,1269.3 2800.0,1266.0 2805.3,1258.0 2802.7,1252.7 2810.7,1239.3 2817.3,1235.3 2833.3,1232.0 2853.3,1226.7 2865.3,1214.0 2868.0,1184.7 2881.3,1181.3 2888.0,1186.0 2896.0,1206.0 2905.3,1214.0 2886.7,1230.0 2873.3,1244.7 2871.3,1255.3 2873.3,1262.0 2882.7,1266.0 2885.3,1271.3 2880.0,1276.7 2865.3,1284.7 2840.0,1301.3 2843.3,1308.0 2842.0,1320.0 2837.3,1328.0 2836.0,1337.3 2833.3,1360.0 2833.3,1368.0 2838.7,1376.0 2840.0,1384.0 2830.7,1394.7 2821.3,1408.0 2808.0,1420.0 2802.9,1423.8 2785.1,1444.6 2779.2,1471.3 2797.0,1504.0 2810.4,1530.7 2808.9,1557.4 2794.0,1563.4 2767.3,1521.8 2761.4,1501.0 2743.5,1489.1 2731.7,1496.5 2713.8,1489.1 2696.0,1489.1 2681.2,1490.6 2666.3,1498.0 2678.2,1509.9 2654.4,1512.9 2633.7,1507.0 2612.9,1508.4 2598.0,1511.4 2577.2,1527.7 2563.9,1542.6 2565.3,1569.3 2553.5,1567.8 2538.6,1563.4 2529.7,1542.6 2513.4,1517.3 2500.0,1508.4 2486.3,1509.9 2480.4,1520.3 2462.5,1509.9 2456.6,1492.0 2437.3,1471.3 2415.0,1474.2 2413.5,1479.6 2403.1,1478.7 2374.9,1475.7 2328.9,1450.5 2331.9,1449.0 2296.2,1447.5 2274.0,1412.0 2259.0,1409.0 2256.0,1406.0 2244.0,1373.8 2238.4,1347.2 2228.0,1307.3 2235.4,1283.7 2235.4,1270.4 2245.0,1240.0 2251.0,1215.0" fill="#c5c1c1"/><polygon points="2235.4,1283.7 2285.6,1294.0 2278.3,1339.8 2335.9,1412.2 2340.3,1425.5 2331.9,1449.0 2296.2,1447.5 2274.0,1412.0 2259.0,1409.0 2256.0,1406.0 2244.0,1373.8 2238.4,1347.2 2228.0,1307.3" fill="#283688"/><polygon points="2285.6,1294.0 2321.0,1298.5 2355.0,1305.0 2347.7,1384.0 2344.7,1397.4 2335.9,1412.2 2278.3,1339.8" fill="#8a85c4"/><polygon points="2336.4,1193.6 2348.3,1195.1 2349.0,1211.3 2361.8,1232.0 2359.5,1248.3 2368.3,1252.7 2374.2,1267.5 2395.0,1266.0 2393.4,1307.3 2355.0,1305.0 2321.0,1298.5 2324.0,1264.5 2334.4,1246.8 2331.4,1232.0" fill="#8a85c4"/><polygon points="2355.0,1305.0 2393.4,1308.8 2392.0,1323.6 2417.0,1326.5 2410.3,1390.0 2347.7,1384.0" fill="#b5b0e0"/><polygon points="2410.3,1390.0 2488.0,1394.5 2484.8,1472.8 2437.3,1471.3 2415.0,1474.2 2413.5,1479.6 2403.1,1478.7" fill="#b5b0e0"/><polygon points="2487.8,1401.5 2526.4,1401.5 2526.7,1431.2 2553.5,1441.6 2589.1,1441.6 2605.4,1446.0 2607.0,1474.3 2614.3,1489.1 2612.9,1508.4 2598.0,1511.4 2577.2,1527.7 2563.9,1542.6 2565.3,1569.3 2553.5,1567.8 2538.6,1563.4 2529.7,1542.6 2513.4,1517.3 2500.0,1508.4 2486.3,1509.9 2480.4,1520.3 2462.5,1509.9 2456.6,1492.0 2437.3,1471.3 2484.8,1472.8" fill="#8a85c4"/><polygon points="2477.6,1298.5 2540.0,1300.0 2562.0,1304.4 2569.5,1308.8 2575.4,1326.5 2582.8,1345.7 2499.8,1347.2 2501.2,1331.0 2476.1,1331.0" fill="#283688"/><polygon points="2680.6,1416.3 2713.8,1413.4 2728.7,1455.0 2730.2,1477.2 2696.0,1480.2 2696.0,1489.1 2685.6,1489.1" fill="#8a85c4"/><polygon points="2696.0,1480.2 2730.2,1477.2 2770.3,1475.7 2779.2,1472.8 2797.0,1504.0 2810.4,1530.7 2808.9,1557.4 2794.0,1563.4 2767.3,1521.8 2761.4,1501.0 2743.5,1489.1 2731.7,1496.5 2713.8,1489.1 2696.0,1489.1" fill="#b5b0e0"/><polygon points="2735.3,1385.3 2745.3,1373.3 2754.0,1368.0 2759.3,1371.3 2774.7,1363.3 2778.7,1345.3 2786.7,1340.0 2794.0,1330.0 2803.3,1330.0 2812.0,1334.7 2810.7,1341.3 2822.7,1346.7 2826.7,1356.0 2833.3,1364.0 2833.3,1368.0" fill="#283688"/><polygon points="2832.7,1344.0 2835.2,1344.7 2831.3,1358.7 2828.8,1357.3" fill="#283688"/><polygon points="2768.0,1290.7 2774.7,1276.7 2774.7,1271.3 2784.0,1269.3 2800.0,1266.0 2805.3,1258.0 2802.7,1252.7 2810.7,1239.3 2817.3,1235.3 2833.3,1232.0 2835.3,1234.0 2842.7,1260.7 2845.3,1290.0 2841.3,1294.7 2826.7,1287.3 2820.0,1284.0 2768.0,1292.7" fill="#8a85c4"/><polygon points="2839.5,1300.5 2846.7,1292.5 2865.5,1285.5 2849.0,1297.0" fill="#8a85c4"/><polygon points="2854.7,1221.3 2858.7,1220.7 2865.3,1239.3 2871.3,1254.0 2868.0,1260.7 2852.0,1262.7 2850.7,1250.0 2853.3,1236.7" fill="#283688"/><polygon points="2304.9,1510.5 2317.1,1501.3 2332.3,1495.2 2344.5,1500.6 2373.5,1503.6 2388.0,1572.9 2394.8,1573.7 2410.0,1573.7 2440.5,1595.8 2436.0,1604.9 2408.5,1585.1 2390.2,1576.0 2372.0,1577.5 2362.8,1572.9 2352.2,1571.4 2347.6,1585.1 2340.0,1589.7 2326.3,1604.9 2312.5,1611.0 2292.7,1618.6 2271.4,1627.0 2250.0,1629.0 2271.0,1622.0 2311.0,1608.0 2326.3,1592.7 2309.5,1589.7 2301.9,1577.5 2295.8,1563.8 2304.9,1554.6 2317.1,1544.0 2301.9,1540.9 2295.8,1533.3 2306.4,1528.8 2317.1,1528.8 2312.5,1522.7 2304.9,1513.5" fill="#c5c1c1"/><polygon points="2725.3,1304.0 2737.3,1308.0 2748.0,1304.0 2768.0,1293.3 2774.7,1280.0 2760.0,1290.0 2733.3,1300.0" fill="#fff"/><polygon points="2667.0,1267.5 2678.8,1249.7 2690.6,1243.8 2701.0,1242.4 2693.6,1249.7 2686.2,1261.6 2684.7,1276.3 2689.1,1297.0 2678.8,1311.8 2672.9,1305.9 2670.0,1288.1 2671.4,1273.4" fill="#fff"/><polygon points="2674.4,1260.0 2685.5,1247.5 2682.5,1256.0 2676.5,1265.0" fill="#c5c1c1"/><polyline points="2822.7,1322.1 2818.8,1328 2820,1336.6 2824.3,1342.6 2826.6,1348.7 2826.5,1356 2831,1361 2832.6,1366" fill="none" stroke="#f6f6f6" stroke-width="2.6" stroke-linejoin="round"/><polyline points="2829.6,1322.8 2836.5,1329" fill="none" stroke="#f6f6f6" stroke-width="2.4"/><polygon points="2549.1,1635.7 2562.1,1641.0 2567.4,1648.7 2562.1,1652.5 2553.0,1658.6 2547.6,1655.5 2546.1,1644.9" fill="#b5b0e0"/><polygon points="2481.0,1603.0 2485.9,1601.0 2489.0,1603.0 2487.8,1607.5 2481.3,1606.4" fill="#b5b0e0"/><polygon points="2472.0,1608.5 2475.8,1604.3 2476.6,1605.0 2473.0,1609.2" fill="#b5b0e0"/><polygon points="2507.2,1612.9 2511.8,1610.6 2517.1,1616.7 2516.4,1618.6 2509.5,1617.0" fill="#b5b0e0"/><polygon points="2524.0,1619.3 2533.1,1619.7 2533.1,1621.6 2524.0,1621.2" fill="#b5b0e0"/><polygon points="2528.6,1624.7 2531.6,1625.0 2530.5,1627.7" fill="#b5b0e0"/><polygon points="2535.0,1622.8 2543.8,1625.4 2546.9,1627.3 2543.8,1630.0 2539.2,1630.4 2535.4,1625.8" fill="#b5b0e0"/><path d="M2250,1629 Q2215,1627 2193,1600" fill="none" stroke="#e2e0e0" stroke-width="1.5"/></svg>
<div class="t" style="left:3089.1px;top:484.20px;font-size:29.45px;line-height:38px;color:#333;font-weight:400;transform:scaleY(1.04) ;transform-origin:0 29.20px;">Report Filters</div>
<div class="r" style="left:3088.0px;top:564.3px;width:405.0px;height:58.8px;background:#fff;border-radius:4px;box-shadow:0 2px 6px rgba(0,0,0,0.10);"></div>
<div class="t" style="left:3118.0px;top:578.45px;font-size:24.1px;line-height:31px;color:#3a3a3a;font-weight:400;transform:scaleY(1.04) ;transform-origin:0 23.85px;">Attorney Assigned</div>
<svg class="s" style="left:3438px;top:582.3px;" width="30" height="25" viewBox="3438 582.3 30 25"><polyline points="3444,588.0999999999999 3453.3,597.4 3462.6,588.0999999999999" fill="none" stroke="#444" stroke-width="2.3"/></svg>
<div class="r" style="left:3088.0px;top:653.4px;width:405.0px;height:58.8px;background:#fff;border-radius:4px;box-shadow:0 2px 6px rgba(0,0,0,0.10);"></div>
<div class="t" style="left:3118.0px;top:667.55px;font-size:24.1px;line-height:31px;color:#3a3a3a;font-weight:400;transform:scaleY(1.04) ;transform-origin:0 23.85px;">Contract Value</div>
<svg class="s" style="left:3438px;top:671.4px;" width="30" height="25" viewBox="3438 671.4 30 25"><polyline points="3444,677.1999999999999 3453.3,686.5 3462.6,677.1999999999999" fill="none" stroke="#444" stroke-width="2.3"/></svg>
<div class="t" style="left:3089.0px;top:755.51px;font-size:29.7px;line-height:39px;color:#333;font-weight:400;transform:scaleY(1.04) ;transform-origin:0 29.79px;">Filter by Status</div>
<div class="r" style="left:3088.2px;top:836.3px;width:404.4px;height:59.2px;background:#fff;border-radius:4px;box-shadow:0 2px 6px rgba(0,0,0,0.10);"></div>
<div class="r" style="left:3103px;top:855.2px;width:17.8px;height:17.8px;border:1.5px solid #707070;border-radius:4px;background:#fff;"></div>
<div class="t" style="left:3139.3px;top:851.96px;font-size:23.2px;line-height:30px;color:#3a3a3a;font-weight:400;transform:scaleY(1.04) ;transform-origin:0 23.04px;">Unassigned (2)</div>
<svg class="s" style="left:3435px;top:841px;" width="50" height="50" viewBox="3435 841 50 50"><circle cx="3460.2" cy="865.9" r="16.5" fill="none" stroke="#d4103a" stroke-width="2.6"/></svg>
<div class="r" style="left:3088.2px;top:925.5px;width:404.4px;height:59.2px;background:#fff;border-radius:4px;box-shadow:0 2px 6px rgba(0,0,0,0.10);"></div>
<div class="r" style="left:3103px;top:944.4px;width:17.8px;height:17.8px;border:1.5px solid #707070;border-radius:4px;background:#fff;"></div>
<div class="t" style="left:3139.3px;top:941.16px;font-size:23.2px;line-height:30px;color:#3a3a3a;font-weight:400;transform:scaleY(1.04) ;transform-origin:0 23.04px;">In Process (30)</div>
<svg class="s" style="left:3435px;top:930px;" width="50" height="50" viewBox="3435 930 50 50"><circle cx="3460.2" cy="955.1" r="16.7" fill="none" stroke="#0b6fae" stroke-width="2.4"/><circle cx="3460.2" cy="955.1" r="10.3" fill="none" stroke="#0b6fae" stroke-width="1.6"/><path d="M3459.30,937.92 A17.2,17.2 0 0 1 3477.31,956.90 L3470.74,956.21 A10.6,10.6 0 0 0 3459.65,944.51 Z" fill="#0b6fae"/></svg>
<div class="r" style="left:3088.2px;top:1014.8px;width:404.4px;height:59.2px;background:#fff;border-radius:4px;box-shadow:0 2px 6px rgba(0,0,0,0.10);"></div>
<div class="r" style="left:3103px;top:1033.7px;width:17.8px;height:17.8px;border:1.5px solid #707070;border-radius:4px;background:#fff;"></div>
<div class="t" style="left:3139.3px;top:1030.46px;font-size:23.2px;line-height:30px;color:#3a3a3a;font-weight:400;transform:scaleY(1.04) ;transform-origin:0 23.04px;">Executed (15)</div>
<svg class="s" style="left:3435px;top:1019px;" width="50" height="50" viewBox="3435 1019 50 50"><circle cx="3460.2" cy="1044.3999999999999" r="16.8" fill="none" stroke="#4ba447" stroke-width="2.1"/><polyline points="3452.7,1045.9999999999998 3457.2,1049.3999999999999 3467.5,1038.8" fill="none" stroke="#4ba447" stroke-width="2.3"/></svg>
<div class="r" style="left:3088.2px;top:1104.1px;width:404.4px;height:59.2px;background:#fff;border-radius:4px;box-shadow:0 2px 6px rgba(0,0,0,0.10);"></div>
<div class="r" style="left:3103px;top:1123.0px;width:17.8px;height:17.8px;border:1.5px solid #707070;border-radius:4px;background:#fff;"></div>
<div class="t" style="left:3139.3px;top:1119.76px;font-size:23.2px;line-height:30px;color:#3a3a3a;font-weight:400;transform:scaleY(1.04) ;transform-origin:0 23.04px;">Cancelled (4)</div>
<svg class="s" style="left:3435px;top:1109px;" width="50" height="50" viewBox="3435 1109 50 50"><circle cx="3460.2" cy="1133.6999999999998" r="15.9" fill="none" stroke="#e9700f" stroke-width="3.8"/><path d="M3454.6,1128.1 L3465.7999999999997,1139.2999999999997 M3465.7999999999997,1128.1 L3454.6,1139.2999999999997" stroke="#e9700f" stroke-width="4.2"/></svg>
<div class="r" style="left:3088.0px;top:1648.8px;width:404.8px;height:56.2px;background:#6c6b70;border-radius:5px;"></div>
<div class="t" style="left:2290.7px;width:2000px;text-align:center;top:1665.56px;font-size:20.6px;line-height:27px;color:#ffffff;font-weight:700;transform:scaleY(1.04) ;transform-origin:0 20.64px;">Clear Filters</div>
</body></html>
